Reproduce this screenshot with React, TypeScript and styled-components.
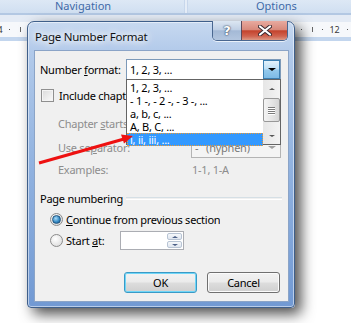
import React from 'react'
import styled, { createGlobalStyle } from 'styled-components'

const GlobalStyle = createGlobalStyle`
  html, body {
    margin: 0;
    padding: 0;
  }
  body {
    width: 351px;
    height: 323px;
    overflow: hidden;
    background: #ffffff;
    font-family: "Noto Sans", "Open Sans", sans-serif;
    font-size: 11px;
    letter-spacing: -0.25px;
    color: #000;
  }
`

const Page = styled.div`
  position: relative;
  width: 351px;
  height: 323px;
  overflow: hidden;
  background: #fff;
`

/* word ribbon behind the dialog */
const RibbonLabels = styled.div`
  display: flex;
  height: 13px;
  background: linear-gradient(#dde8f5, #d0dff1);
  border-bottom: 2px solid #b3c8e3;
`

const GroupLabel = styled.div<{ $width: number; $pad: number }>`
  width: ${p => p.$width}px;
  padding-left: ${p => p.$pad}px;
  box-sizing: border-box;
  font-size: 11px;
  line-height: 12px;
  letter-spacing: 0;
  color: #3f6aa8;
  white-space: nowrap;
`

const GroupDivider = styled.div`
  width: 4px;
  background: linear-gradient(90deg, #b9cce6, #f4f8fd, #b9cce6);
`

const RulerStrip = styled.div`
  height: 7px;
  background: #e4ebf5;
`

const Ruler = styled.div`
  display: flex;
  align-items: center;
  height: 15px;
  background: #f6f8fb;
  border-bottom: 4px solid #c3d6ee;
  font-size: 9px;
  color: #3a3a3a;
`

const RulerNum = styled.span<{ $ml: number; $w: number }>`
  margin-left: ${p => p.$ml}px;
  width: ${p => p.$w}px;
  text-align: center;
  line-height: 11px;
`

const RulerDot = styled.span<{ $ml: number }>`
  margin-left: ${p => p.$ml}px;
  width: 1px;
  height: 1px;
  background: #555;
`

const RulerBar = styled.span<{ $ml: number }>`
  margin-left: ${p => p.$ml}px;
  width: 1px;
  height: 5px;
  background: #666;
`

/* dialog window */
const Window = styled.div`
  position: absolute;
  left: 27px;
  top: 21px;
  width: 268px;
  height: 287px;
  box-sizing: border-box;
  display: flex;
  flex-direction: column;
  padding: 0 5px 5px 6px;
  border: 1px solid #3f5f8a;
  border-radius: 7px 7px 4px 4px;
  background: linear-gradient(180deg, #c7d9f0 0px, #b2caea 30px, #92b3e0 140px, #7199d3 287px);
  box-shadow: inset 0 0 0 1px rgba(255, 255, 255, 0.5), 6px 6px 14px rgba(0, 0, 0, 0.7);
`

const TitleBar = styled.div`
  display: flex;
  align-items: center;
  height: 28px;
`

const Title = styled.div`
  padding-left: 1px;
  font-size: 11.5px;
  color: #111;
  text-shadow: 0 0 6px #fff, 0 0 10px #fff, 0 0 14px #fff;
`

const CaptionButtons = styled.div`
  display: flex;
  align-self: flex-start;
  margin: -1px 1px 0 auto;
  border: 1px solid #4a6790;
  border-top: none;
  border-radius: 0 0 5px 5px;
  overflow: hidden;
  box-shadow: 0 1px 0 rgba(255, 255, 255, 0.7);
`

const CaptionButton = styled.div<{ $close?: boolean }>`
  width: ${p => (p.$close ? 46 : 28)}px;
  height: 19px;
  display: flex;
  align-items: center;
  justify-content: center;
  box-sizing: border-box;
  border-left: ${p => (p.$close ? '1px solid #5d4a5a' : 'none')};
  background: ${p =>
    p.$close
      ? 'linear-gradient(#e8aa9f 0%, #d88a7c 45%, #c4432d 52%, #d06450 80%, #dc9a86 100%)'
      : 'linear-gradient(#dce6f2 0%, #c0d0e5 45%, #a4b9d6 52%, #b3c6df 100%)'};
  color: #fff;
  font-family: "DejaVu Sans", sans-serif;
  font-weight: bold;
  font-size: 13px;
  text-shadow: 0 0 1px #2c3e5a, 0 0 2px #2c3e5a;
`

const Client = styled.div`
  position: relative;
  flex: 1;
  display: flex;
  flex-direction: column;
  background: #f0f0f0;
  border: 1px solid #8ba4c7;
`

const Row = styled.div<{ $mt: number; $h: number; $pl?: number }>`
  display: flex;
  align-items: center;
  margin-top: ${p => p.$mt}px;
  height: ${p => p.$h}px;
  padding-left: ${p => p.$pl ?? 0}px;
  white-space: nowrap;
`

const Label = styled.span<{ $w?: number; $disabled?: boolean }>`
  width: ${p => (p.$w ? `${p.$w}px` : 'auto')};
  flex-shrink: 0;
  overflow: hidden;
  color: ${p => (p.$disabled ? '#8d8d8d' : '#000')};
`

const U = styled.span`
  text-decoration: underline;
`

const Combo = styled.div<{ $w: number; $disabled?: boolean }>`
  display: flex;
  align-items: stretch;
  width: ${p => p.$w}px;
  height: 21px;
  box-sizing: border-box;
  border: 1px solid ${p => (p.$disabled ? '#b4b4b4' : '#7c99b8')};
  background: ${p => (p.$disabled ? '#f4f4f4' : '#fff')};
  color: ${p => (p.$disabled ? '#7a7a7a' : '#000')};
`

const ComboText = styled.div`
  flex: 1;
  display: flex;
  align-items: center;
  padding-left: 3px;
  white-space: pre;
`

const ComboButton = styled.div<{ $disabled?: boolean }>`
  width: 17px;
  display: flex;
  align-items: center;
  justify-content: center;
  box-sizing: border-box;
  border: ${p => (p.$disabled ? 'none' : '1px solid #3c7fb1')};
  background: ${p =>
    p.$disabled ? '#f4f4f4' : 'linear-gradient(#e3f2fb 0%, #bfe0f5 45%, #93c9ec 55%, #7dbbe6 100%)'};
`

const Arrow = styled.span<{ $up?: boolean; $color?: string; $size?: number }>`
  width: 0;
  height: 0;
  border-left: ${p => p.$size ?? 4}px solid transparent;
  border-right: ${p => p.$size ?? 4}px solid transparent;
  ${p =>
    p.$up
      ? `border-bottom: ${(p.$size ?? 4) - 1}px solid ${p.$color ?? '#000'};`
      : `border-top: ${(p.$size ?? 4) - 1}px solid ${p.$color ?? '#000'};`}
`

const CheckBox = styled.span`
  width: 13px;
  height: 13px;
  box-sizing: border-box;
  margin-right: 5px;
  border: 1px solid #8f8f8f;
  background: linear-gradient(135deg, #dadada, #fbfbfb);
  box-shadow: inset 0 0 0 1px #f4f4f4;
`

const Radio = styled.span<{ $checked?: boolean }>`
  position: relative;
  width: 13px;
  height: 13px;
  box-sizing: border-box;
  margin-left: 15px;
  margin-right: 3px;
  border-radius: 50%;
  border: 1px solid #8b8b8b;
  background: radial-gradient(circle at 40% 35%, #ffffff, #d6d6d6);
  display: flex;
  align-items: center;
  justify-content: center;
  &::after {
    content: '';
    display: ${p => (p.$checked ? 'block' : 'none')};
    width: 7px;
    height: 7px;
    border-radius: 50%;
    background: radial-gradient(circle at 40% 35%, #a8dcfa, #2f85c0 60%, #1a4f82);
    border: 0.5px solid #23557e;
  }
`

const GroupLine = styled.div`
  flex: 1;
  margin-right: 6px;
  height: 1px;
  border-top: 1px solid #d5dfe5;
  border-bottom: 1px solid #fff;
`

const SpinBox = styled.div`
  display: flex;
  width: 64px;
  height: 19px;
  box-sizing: border-box;
  border: 1px solid #abadb3;
  background: #fff;
`

const SpinButtons = styled.div`
  margin-left: auto;
  width: 15px;
  display: flex;
  flex-direction: column;
  gap: 1px;
  padding: 1px 1px 1px 0;
`

const SpinHalf = styled.div`
  flex: 1;
  display: flex;
  align-items: center;
  justify-content: center;
  border: 1px solid #b8c4d4;
  border-radius: 2px;
  background: linear-gradient(#f6f8fb, #dfe6ef);
`

const ButtonRow = styled.div`
  display: flex;
  justify-content: flex-end;
  gap: 10px;
  margin-top: 22px;
  padding-right: 8px;
`

const PushButton = styled.div<{ $default?: boolean }>`
  width: 73px;
  height: 21px;
  box-sizing: border-box;
  display: flex;
  align-items: center;
  justify-content: center;
  border: 1px solid ${p => (p.$default ? '#3a9ac6' : '#707070')};
  border-radius: 3px;
  background: linear-gradient(#f2f2f2 0%, #ebebeb 48%, #dddddd 52%, #cfcfcf 100%);
  box-shadow: inset 0 0 0 1px ${p => (p.$default ? '#6fd6f8' : '#fbfbfb')};
`

/* the open drop-down list of the number format combo */
const ListBox = styled.div`
  position: absolute;
  left: 91px;
  top: 28px;
  width: 155px;
  height: 66px;
  box-sizing: border-box;
  display: flex;
  border: 1px solid #646464;
  background: #fff;
`

const Items = styled.div`
  flex: 1;
  display: flex;
  flex-direction: column;
  padding-top: 1px;
`

const Item = styled.div<{ $selected?: boolean }>`
  height: 13px;
  line-height: 13px;
  padding-left: 3px;
  box-sizing: border-box;
  white-space: pre;
  ${p =>
    p.$selected &&
    `
    background: #3399ff;
    color: #fff;
    border: 1px dotted #f09a30;
    padding-left: 2px;
    line-height: 11px;
  `}
`

const ScrollBar = styled.div`
  width: 17px;
  display: flex;
  flex-direction: column;
  background: linear-gradient(90deg, #e6e6e6, #f3f3f3);
`

const ScrollArrow = styled.div<{ $bottom?: boolean }>`
  height: 17px;
  margin-top: ${p => (p.$bottom ? 'auto' : '0')};
  display: flex;
  align-items: center;
  justify-content: center;
`

const Thumb = styled.div`
  height: 24px;
  margin: 1px 0 5px 0;
  box-sizing: border-box;
  border: 1px solid #989898;
  border-radius: 2px;
  background: linear-gradient(90deg, #f4f4f4, #e6e6e6 50%, #d6d6d6);
  display: flex;
  flex-direction: column;
  align-items: center;
  justify-content: center;
  gap: 1px;
`

const Grip = styled.span`
  width: 7px;
  height: 1px;
  background: #7b7b7b;
  box-shadow: 0 1px 0 #fff;
`

const Overlay = styled.svg`
  position: absolute;
  left: 0;
  top: 0;
  pointer-events: none;
`

export default function App() {
  return (
    <Page>
      <GlobalStyle />
      <RibbonLabels>
        <GroupLabel $width={184} $pad={55}>Navigation</GroupLabel>
        <GroupDivider />
        <GroupLabel $width={163} $pad={68}>Options</GroupLabel>
      </RibbonLabels>
      <RulerStrip />
      <Ruler>
        <RulerNum $ml={-3} $w={6}>4</RulerNum>
        <RulerDot $ml={6} />
        <RulerBar $ml={10} />
        <RulerDot $ml={280} />
        <RulerBar $ml={10} />
        <RulerDot $ml={9} />
        <RulerNum $ml={6} $w={11}>12</RulerNum>
        <RulerDot $ml={7} />
      </Ruler>

      <Window>
        <TitleBar>
          <Title>Page Number Format</Title>
          <CaptionButtons>
            <CaptionButton>?</CaptionButton>
            <CaptionButton $close>
              <svg width="14" height="11" viewBox="0 0 14 11">
                <path d="M2 1.5 L12 9.5 M12 1.5 L2 9.5" stroke="#3a2a30" strokeWidth="4" strokeLinecap="round" />
                <path d="M2 1.5 L12 9.5 M12 1.5 L2 9.5" stroke="#fff" strokeWidth="2.2" strokeLinecap="round" />
              </svg>
            </CaptionButton>
          </CaptionButtons>
        </TitleBar>

        <Client>
          <Row $mt={8} $h={21} $pl={5}>
            <Label $w={86}>Number <U>f</U>ormat:</Label>
            <Combo $w={155}>
              <ComboText>1, 2, 3, ...</ComboText>
              <ComboButton>
                <Arrow />
              </ComboButton>
            </Combo>
          </Row>

          <Row $mt={9} $h={13} $pl={6}>
            <CheckBox />
            <Label>Include chapter <U>n</U>umber</Label>
          </Row>

          <Row $mt={11} $h={21} $pl={23}>
            <Label $w={133} $disabled>Chapter <U>s</U>tarts with style:</Label>
            <Combo $w={90} $disabled>
              <ComboText>Heading 1</ComboText>
              <ComboButton $disabled>
                <Arrow $color="#a0a0a0" />
              </ComboButton>
            </Combo>
          </Row>

          <Row $mt={3} $h={21} $pl={23}>
            <Label $w={133} $disabled>Use se<U>p</U>arator:</Label>
            <Combo $w={90} $disabled>
              <ComboText>{'-   (hyphen)'}</ComboText>
              <ComboButton $disabled>
                <Arrow $color="#a0a0a0" />
              </ComboButton>
            </Combo>
          </Row>

          <Row $mt={4} $h={14} $pl={23}>
            <Label $w={134} $disabled>Examples:</Label>
            <Label $disabled>1-1, 1-A</Label>
          </Row>

          <Row $mt={15} $h={14} $pl={5}>
            <Label $w={86}>Page numbering</Label>
            <GroupLine />
          </Row>

          <Row $mt={7} $h={14}>
            <Radio $checked />
            <Label><U>C</U>ontinue from previous section</Label>
          </Row>

          <Row $mt={5} $h={19}>
            <Radio />
            <Label $w={54}>Start <U>a</U>t:</Label>
            <SpinBox>
              <SpinButtons>
                <SpinHalf><Arrow $up $size={3} $color="#4b5f86" /></SpinHalf>
                <SpinHalf><Arrow $size={3} $color="#4b5f86" /></SpinHalf>
              </SpinButtons>
            </SpinBox>
          </Row>

          <ButtonRow>
            <PushButton $default>OK</PushButton>
            <PushButton>Cancel</PushButton>
          </ButtonRow>

          <ListBox>
            <Items>
              <Item>1, 2, 3, ...</Item>
              <Item>- 1 -, - 2 -, - 3 -, ...</Item>
              <Item>a, b, c, ...</Item>
              <Item>A, B, C, ...</Item>
              <Item $selected>i, ii, iii, ...</Item>
            </Items>
            <ScrollBar>
              <ScrollArrow>
                <Arrow $up $size={3} $color="#555" />
              </ScrollArrow>
              <Thumb>
                <Grip />
                <Grip />
                <Grip />
                <Grip />
              </Thumb>
              <ScrollArrow $bottom>
                <Arrow $size={3} $color="#555" />
              </ScrollArrow>
            </ScrollBar>
          </ListBox>
        </Client>
      </Window>

      <Overlay width="351" height="323" viewBox="0 0 351 323">
        <line x1="39" y1="163" x2="124" y2="139" stroke="#ee1111" strokeWidth="3" />
        <polygon points="133,136 121,134.5 124,143.5" fill="#ee1111" />
      </Overlay>
    </Page>
  )
}
